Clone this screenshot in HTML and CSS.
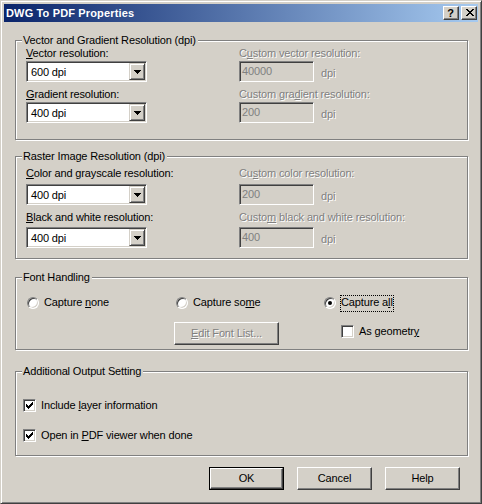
FILE: index.html
```
<!DOCTYPE html>
<html>
<head>
<meta charset="utf-8">
<title>DWG To PDF Properties</title>
<link rel="stylesheet" href="styles.css">
</head>
<body>
<div class="window">
  <div class="titlebar">
    <span class="title">DWG To PDF Properties</span>
    <span class="tbtns">
      <span class="tbtn help">?</span>
      <span class="tbtn close">
        <svg width="8" height="7" viewBox="0 0 8 7" shape-rendering="crispEdges">
          <rect x="0" y="0" width="2" height="1"/><rect x="6" y="0" width="2" height="1"/>
          <rect x="1" y="1" width="2" height="1"/><rect x="5" y="1" width="2" height="1"/>
          <rect x="2" y="2" width="4" height="1"/>
          <rect x="3" y="3" width="2" height="1"/>
          <rect x="2" y="4" width="4" height="1"/>
          <rect x="1" y="5" width="2" height="1"/><rect x="5" y="5" width="2" height="1"/>
          <rect x="0" y="6" width="2" height="1"/><rect x="6" y="6" width="2" height="1"/>
        </svg>
      </span>
    </span>
  </div>

  <div class="content">
    <div class="group g1">
      <span class="legend">Vector and Gradient Resolution (dpi)</span>
      <div class="cols">
        <div class="col">
          <div class="lbl first"><u>V</u>ector resolution:</div>
          <div class="combo"><span class="val">600 dpi</span><span class="drop"><svg width="7" height="4" viewBox="0 0 7 4" shape-rendering="crispEdges"><path d="M0 0h7v1h-1v1h-1v1h-1v1h-1v-1h-1v-1h-1v-1h-1z"/></svg></span></div>
          <div class="lbl second"><u>G</u>radient resolution:</div>
          <div class="combo"><span class="val">400 dpi</span><span class="drop"><svg width="7" height="4" viewBox="0 0 7 4" shape-rendering="crispEdges"><path d="M0 0h7v1h-1v1h-1v1h-1v1h-1v-1h-1v-1h-1v-1h-1z"/></svg></span></div>
        </div>
        <div class="col">
          <div class="lbl first dis">C<u>u</u>stom vector resolution:</div>
          <div class="field"><span class="edit">40000</span><span class="unit">dpi</span></div>
          <div class="lbl second dis">Custom gra<u>d</u>ient resolution:</div>
          <div class="field"><span class="edit">200</span><span class="unit">dpi</span></div>
        </div>
      </div>
    </div>

    <div class="group g2">
      <span class="legend">Raster Image Resolution (dpi)</span>
      <div class="cols">
        <div class="col">
          <div class="lbl first"><u>C</u>olor and grayscale resolution:</div>
          <div class="combo"><span class="val">400 dpi</span><span class="drop"><svg width="7" height="4" viewBox="0 0 7 4" shape-rendering="crispEdges"><path d="M0 0h7v1h-1v1h-1v1h-1v1h-1v-1h-1v-1h-1v-1h-1z"/></svg></span></div>
          <div class="lbl second"><u>B</u>lack and white resolution:</div>
          <div class="combo"><span class="val">400 dpi</span><span class="drop"><svg width="7" height="4" viewBox="0 0 7 4" shape-rendering="crispEdges"><path d="M0 0h7v1h-1v1h-1v1h-1v1h-1v-1h-1v-1h-1v-1h-1z"/></svg></span></div>
        </div>
        <div class="col">
          <div class="lbl first dis">Cu<u>s</u>tom color resolution:</div>
          <div class="field"><span class="edit">200</span><span class="unit">dpi</span></div>
          <div class="lbl second dis">Custo<u>m</u> black and white resolution:</div>
          <div class="field"><span class="edit">400</span><span class="unit">dpi</span></div>
        </div>
      </div>
    </div>

    <div class="group g3">
      <span class="legend">Font Handling</span>
      <div class="fonts">
        <label class="opt r1"><span class="radio"></span><span class="otext">Capture <u>n</u>one</span></label>
        <label class="opt r2"><span class="radio"></span><span class="otext">Capture so<u>m</u>e</span></label>
        <label class="opt r3"><span class="radio on"><span class="dot"></span></span><span class="otext focus">Capture a<u>l</u>l</span></label>
        <span class="spacer"></span>
        <span class="btn edit-btn"><span class="dis"><u>E</u>dit Font List...</span></span>
        <label class="opt geo"><span class="check"></span><span class="otext">As geometr<u>y</u></span></label>
      </div>
    </div>

    <div class="group g4">
      <span class="legend">Additional Output Setting</span>
      <div class="checks">
        <label class="opt"><span class="check"><svg width="7" height="7" viewBox="0 0 7 7" shape-rendering="crispEdges"><path d="M6 0h1v3h-1v1h-1v1h-1v1h-1v1h-1v-1h-1v-1h-1v-3h1v1h1v1h1v-1h1v-1h1z"/></svg></span><span class="otext">Include <u>l</u>ayer information</span></label>
        <label class="opt"><span class="check"><svg width="7" height="7" viewBox="0 0 7 7" shape-rendering="crispEdges"><path d="M6 0h1v3h-1v1h-1v1h-1v1h-1v1h-1v-1h-1v-1h-1v-3h1v1h1v1h1v-1h1v-1h1z"/></svg></span><span class="otext">Open in <u>P</u>DF viewer when done</span></label>
      </div>
    </div>

    <div class="buttons">
      <span class="btn default"><span class="btn-in">OK</span></span>
      <span class="btn">Cancel</span>
      <span class="btn">Help</span>
    </div>
  </div>
</div>
</body>
</html>
```
FILE: styles.css
```
html, body {
  margin: 0;
  padding: 0;
  background: #d4d0c8;
}
.window {
  width: 482px;
  height: 504px;
  box-sizing: border-box;
  border: 1px solid;
  border-color: #d4d0c8 #404040 #404040 #d4d0c8;
  box-shadow: inset 1px 1px 0 #fff, inset -1px -1px 0 #808080;
  padding: 3px;
  background: #d4d0c8;
  font-family: "Liberation Sans", Arial, sans-serif;
  font-size: 11px;
  line-height: 13px;
  letter-spacing: -0.14px;
  color: #000;
}
u { text-decoration: underline; text-underline-offset: 1px; }

.titlebar {
  height: 18px;
  display: flex;
  align-items: center;
  justify-content: space-between;
  background: linear-gradient(to right, #0a246a, #a6caf0);
  padding: 0 1px 0 2px;
}
.title {
  color: #fff;
  font-weight: bold;
  font-size: 11px;
  letter-spacing: 0.15px;
  line-height: 18px;
}
.tbtns { display: flex; gap: 2px; margin-top: -1px; }
.tbtn {
  width: 16px;
  height: 14px;
  box-sizing: border-box;
  border: 1px solid;
  border-color: #fff #404040 #404040 #fff;
  box-shadow: inset -1px -1px 0 #808080, inset 1px 1px 0 #d4d0c8;
  background: #d4d0c8;
  display: flex;
  align-items: center;
  justify-content: center;
}
.tbtn.help { font-weight: bold; font-size: 11px; line-height: 12px; padding-right: 1px; letter-spacing: 0; }
.tbtn.close svg { fill: #000; display: block; margin-left: 1px; }

.content { padding: 18px 0 0 11px; }

.group {
  position: relative;
  width: 453px;
  box-sizing: border-box;
  border: 1px solid #808080;
  box-shadow: inset 1px 1px 0 #fff, 1px 1px 0 #fff;
}
.legend {
  position: absolute;
  left: 6px;
  top: -7px;
  padding: 0 2px 0 1px;
  background: #d4d0c8;
  line-height: 13px;
}
.g1 { height: 100px; padding: 6px 0 0 10px; }
.g2 { height: 103px; padding: 10px 0 0 10px; margin-top: 16px; }
.g3 { height: 73px; padding: 0 0 0 11px; margin-top: 18px; }
.g4 { height: 85px; padding: 0 0 0 7px; margin-top: 21px; }

.cols { display: grid; grid-template-columns: 213px 1fr; }
.col { display: flex; flex-direction: column; align-items: flex-start; }
.lbl { line-height: 13px; white-space: nowrap; }
.g1 .lbl.first { margin-bottom: 1px; }
.g1 .lbl.second { margin-top: 6px; margin-bottom: 1px; }
.g2 .lbl.first { margin-bottom: 4px; }
.g2 .lbl.second { margin-top: 6px; margin-bottom: 3px; }
.dis { color: #808080; text-shadow: 1px 1px 0 #fff; }

.combo {
  width: 121px;
  height: 21px;
  box-sizing: border-box;
  border: 1px solid;
  border-color: #808080 #fff #fff #808080;
  box-shadow: inset 1px 1px 0 #404040, inset -1px -1px 0 #d4d0c8;
  background: #fff;
  padding: 2px;
  display: flex;
}
.combo .val {
  flex: 1;
  padding-left: 2px;
  line-height: 17px;
}
.drop {
  width: 16px;
  height: 17px;
  margin: -1px -1px 0 0;
  box-sizing: border-box;
  border: 1px solid;
  border-color: #d4d0c8 #404040 #404040 #d4d0c8;
  box-shadow: inset 1px 1px 0 #fff, inset -1px -1px 0 #808080;
  background: #d4d0c8;
  display: flex;
  align-items: center;
  justify-content: center;
}
.drop svg { display: block; fill: #000; margin-top: 1px; }

.field { display: flex; align-items: flex-start; }
.edit {
  width: 75px;
  height: 21px;
  box-sizing: border-box;
  border: 1px solid;
  border-color: #808080 #fff #fff #808080;
  box-shadow: inset 1px 1px 0 #404040, inset -1px -1px 0 #d4d0c8;
  background: #d4d0c8;
  color: #808080;
  padding: 0 0 0 2px;
  line-height: 18px;
}
.unit {
  margin-left: 7px;
  margin-top: 6px;
  color: #808080;
  text-shadow: 1px 1px 0 #fff;
}

.fonts {
  display: grid;
  grid-template-columns: 147px 148px auto;
  padding-top: 16px;
  row-gap: 11px;
}
.opt { display: flex; align-items: center; white-space: nowrap; }
.r2, .r3 { margin-left: 2px; }
.radio {
  width: 12px;
  height: 12px;
  box-sizing: border-box;
  border-radius: 50%;
  border: 1px solid;
  border-color: #808080 #fff #fff #808080;
  box-shadow: inset 1px 1px 0 #404040, inset -1px -1px 0 #d4d0c8;
  background: #fff;
  display: flex;
  align-items: center;
  justify-content: center;
  margin-right: 5px;
}
.dot { width: 4px; height: 4px; border-radius: 50%; background: #000; }
.focus { outline: 1px dotted #000; outline-offset: 0; padding-bottom: 2px; line-height: 13px; margin-top: 2px; }

.btn {
  box-sizing: border-box;
  width: 75px;
  height: 23px;
  border: 1px solid;
  border-color: #fff #404040 #404040 #fff;
  box-shadow: inset -1px -1px 0 #808080, inset 1px 1px 0 #d4d0c8;
  background: #d4d0c8;
  display: flex;
  align-items: center;
  justify-content: center;
  white-space: nowrap;
}
.edit-btn { width: 105px; }
.geo { margin-left: 19px; margin-top: 3px; align-self: start; }
.check {
  width: 13px;
  height: 13px;
  box-sizing: border-box;
  border: 1px solid;
  border-color: #808080 #fff #fff #808080;
  box-shadow: inset 1px 1px 0 #404040, inset -1px -1px 0 #d4d0c8;
  background: #fff;
  display: flex;
  align-items: center;
  justify-content: center;
  margin-right: 5px;
  flex: none;
}
.check svg { display: block; fill: #000; }

.checks {
  display: flex;
  flex-direction: column;
  gap: 17px;
  padding-top: 27px;
}

.buttons {
  display: flex;
  justify-content: flex-end;
  gap: 13px;
  padding-right: 18px;
  margin-top: 11px;
}
.btn.default {
  border: 1px solid #000;
  box-shadow: none;
  padding: 0;
}
.btn-in {
  width: 100%;
  height: 100%;
  box-sizing: border-box;
  border: 1px solid;
  border-color: #fff #404040 #404040 #fff;
  box-shadow: inset -1px -1px 0 #808080, inset 1px 1px 0 #d4d0c8;
  display: flex;
  align-items: center;
  justify-content: center;
}
```
